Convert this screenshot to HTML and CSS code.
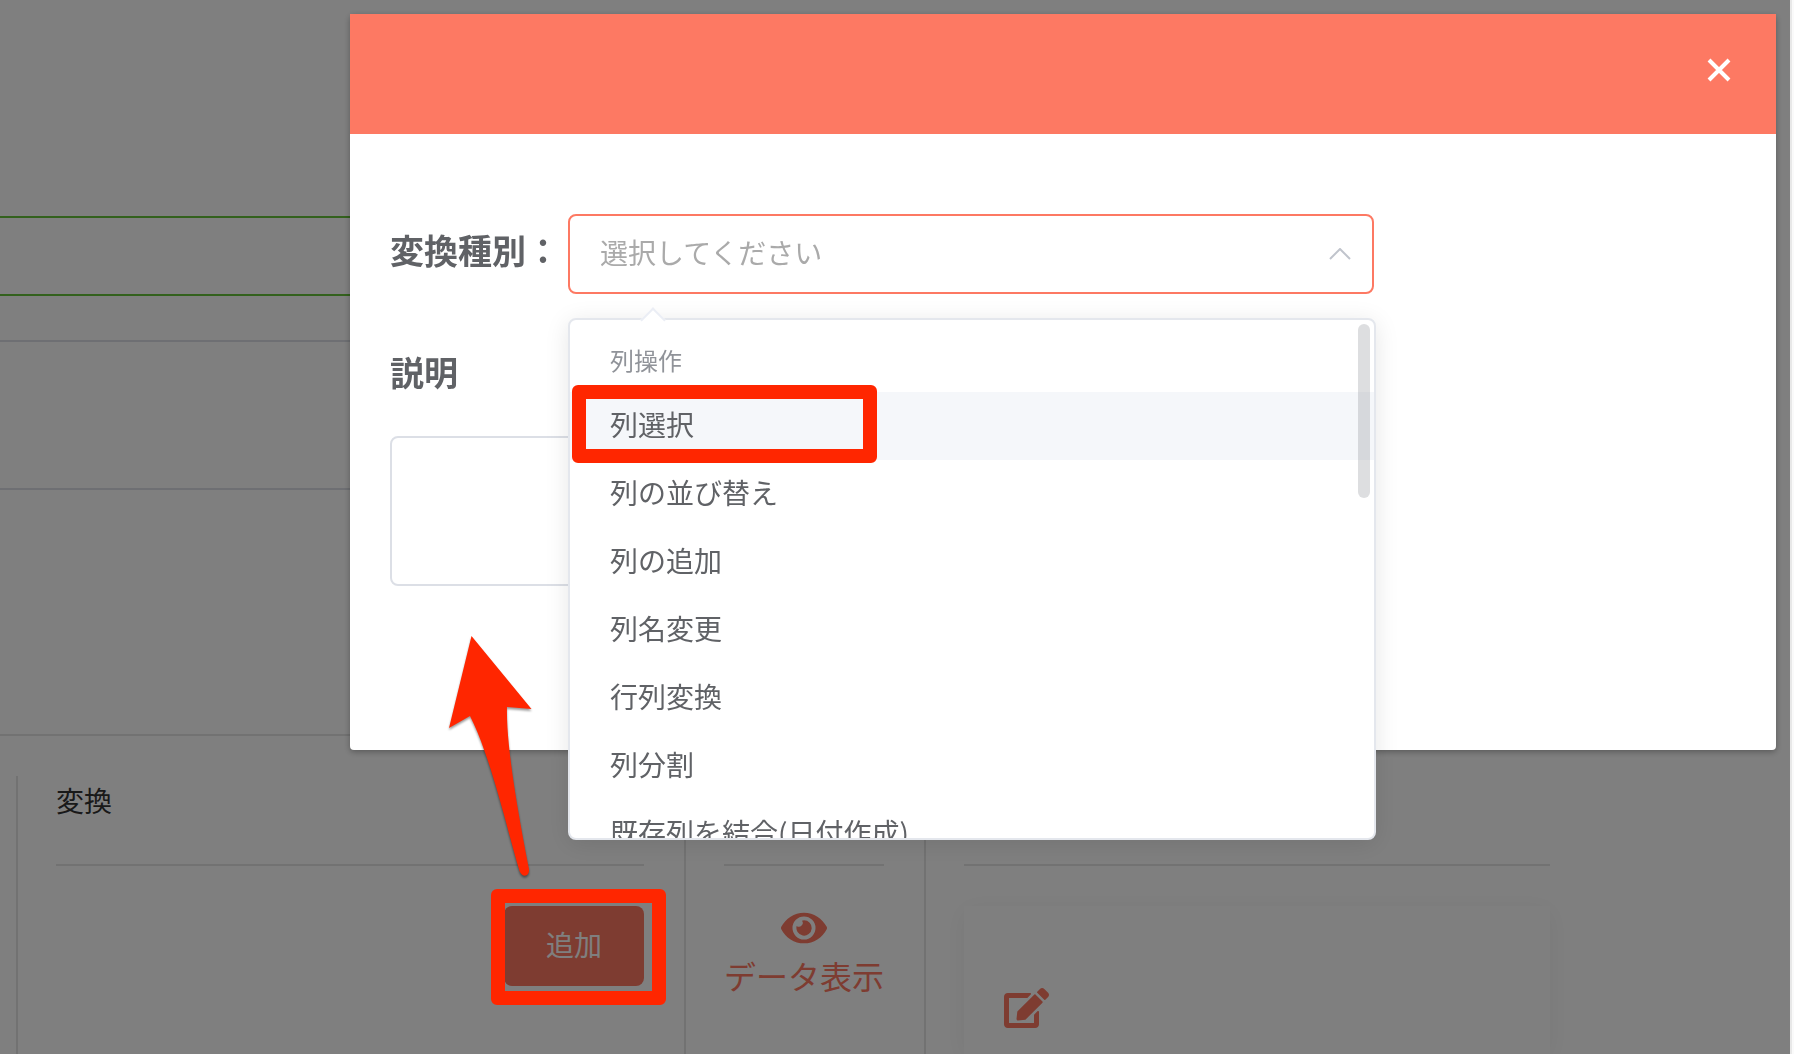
FILE: index.html
```html
<!DOCTYPE html>
<html lang="ja">
<head>
  <meta charset="UTF-8">
  <title>変換</title>
  <link rel="stylesheet" href="styles.css">
</head>
<body>
  <div class="page">
    <main class="main">
      <div class="toolbar"></div>
      <div class="notice"></div>
      <div class="panel"></div>
      <div class="spacer"></div>
      <div class="columns">
        <section class="column">
          <div class="column-head">変換</div>
          <div class="column-body align-right">
            <button type="button" class="add-btn">追加</button>
          </div>
        </section>
        <section class="column">
          <div class="column-head"></div>
          <div class="column-body">
            <a href="#" class="data-link">
              <svg class="eye-icon" viewBox="0 0 576 512" fill="currentColor">
                <path d="M572.52 241.4C518.29 135.59 410.93 64 288 64S57.68 135.64 3.48 241.41a32.35 32.35 0 0 0 0 29.19C57.71 376.41 165.07 448 288 448s230.32-71.64 284.52-177.41a32.35 32.35 0 0 0 0-29.19zM288 400a144 144 0 1 1 144-144 143.93 143.93 0 0 1-144 144zm0-240a95.31 95.31 0 0 0-25.18 3.79 47.85 47.85 0 0 1-66.9 66.9A95.78 95.78 0 1 0 288 160z"/>
              </svg>
              データ表示
            </a>
          </div>
        </section>
        <section class="column">
          <div class="column-head"></div>
          <div class="column-body">
            <div class="card">
              <button type="button" class="edit-btn" aria-label="編集">
                <svg class="edit-icon" viewBox="0 0 576 512" fill="currentColor">
                  <path d="M402.6 83.2l90.2 90.2c3.8 3.8 3.8 10 0 13.8L274.4 405.6l-92.8 10.3c-12.4 1.4-22.9-9.1-21.5-21.5l10.3-92.8L388.8 83.2c3.8-3.8 10-3.8 13.8 0zm162-22.9l-48.8-48.8c-15.2-15.2-39.9-15.2-55.2 0l-35.4 35.4c-3.8 3.8-3.8 10 0 13.8l90.2 90.2c3.8 3.8 10 3.8 13.8 0l35.4-35.4c15.2-15.3 15.2-40 0-55.2zM384 346.2V448H64V128h229.8c3.2 0 6.2-1.3 8.5-3.5l40-40c7.6-7.6 2.2-20.5-8.5-20.5H48C21.5 64 0 85.5 0 112v352c0 26.5 21.5 48 48 48h352c26.5 0 48-21.5 48-48V306.2c0-10.7-12.9-16-20.5-8.5l-40 40c-2.2 2.3-3.5 5.3-3.5 8.5z"/>
                </svg>
              </button>
            </div>
          </div>
        </section>
      </div>
    </main>
    <div class="page-edge"></div>
  </div>

  <div class="overlay">
    <div class="dialog" role="dialog">
      <div class="dialog-header">
        <button type="button" class="close-btn" aria-label="閉じる">
          <svg class="close-icon" viewBox="0 0 24 24" fill="none" stroke="currentColor" stroke-width="4">
            <path d="M2 2L22 22M22 2L2 22"/>
          </svg>
        </button>
      </div>
      <div class="dialog-body">
        <div class="form-row">
          <label class="form-label" for="convertType">変換種別：</label>
          <div class="select-wrapper">
            <select id="convertType" class="select-input">
              <option value="">選択してください</option>
            </select>
            <svg class="select-arrow" viewBox="0 0 22 12" fill="none" stroke="currentColor" stroke-width="2">
              <path d="M1 11L11 1L21 11"/>
            </svg>
            <div class="dropdown">
              <div class="dropdown-scroll">
                <div class="group-title">列操作</div>
                <ul class="options">
                  <li class="option hover">列選択</li>
                  <li class="option">列の並び替え</li>
                  <li class="option">列の追加</li>
                  <li class="option">列名変更</li>
                  <li class="option">行列変換</li>
                  <li class="option">列分割</li>
                  <li class="option">既存列を結合(日付作成)</li>
                </ul>
              </div>
              <div class="scroll-thumb"></div>
            </div>
          </div>
        </div>
        <label class="form-label desc-label" for="description">説明</label>
        <textarea id="description" class="desc-input"></textarea>
      </div>
    </div>
  </div>

  <!-- 操作手順の目印 -->
  <div class="mark mark-option"></div>
  <div class="mark mark-add"></div>
  <svg class="mark-arrow" viewBox="0 0 90 246">
    <path fill="#ff2600" d="M25.5 3L85.5 76L61 74C60 112 72 180 83 236C84 244 76 245 73.500 238C61 195 44 122 24 83L3 95Z"/>
  </svg>
</body>
</html>
```

FILE: styles.css
```css
* {
  box-sizing: border-box;
}
body {
  margin: 0;
  background: #fff;
  color: #333;
  font-family: "Noto Sans CJK JP", sans-serif;
  font-size: 28px;
  overflow: hidden;
}
button,
select,
textarea {
  font-family: inherit;
  font-size: inherit;
}
.page {
  display: flex;
  height: 100vh;
}
.main {
  flex: 1;
  display: flex;
  flex-direction: column;
}
.page-edge {
  width: 4px;
  border-left: 2px solid #e8e8e8;
  background: #fafafa;
}
.toolbar {
  height: 216px;
}
.notice,
.panel,
.spacer {
  margin-right: 40px;
}
.notice {
  height: 80px;
  margin-bottom: 44px;
  border-top: 2px solid #67c23a;
  border-bottom: 2px solid #67c23a;
}
.panel {
  height: 150px;
  border-top: 2px solid #dcdfe6;
  border-bottom: 2px solid #dcdfe6;
}
.spacer {
  height: 246px;
  margin-bottom: 40px;
  border-bottom: 2px solid #e4e4e4;
}
.columns {
  flex: 1;
  display: grid;
  grid-template-columns: 668px 240px 1fr;
  padding: 0 200px 0 16px;
}
.column {
  display: flex;
  flex-direction: column;
  padding: 0 40px 0 38px;
  border-left: 2px solid #e4e4e4;
}
.column-head {
  height: 90px;
  line-height: 48px;
  border-bottom: 2px solid #e4e4e4;
}
.column-body {
  flex: 1;
  padding-top: 40px;
}
.align-right {
  text-align: right;
}
.add-btn {
  width: 140px;
  height: 80px;
  padding: 0 0 4px;
  border: none;
  border-radius: 8px;
  background: #fd7963;
  color: #fff;
  cursor: pointer;
}
.data-link {
  display: flex;
  flex-direction: column;
  align-items: center;
  color: #fd7963;
  font-size: 32px;
  line-height: 50px;
  text-decoration: none;
  white-space: nowrap;
}
.eye-icon {
  width: 46px;
  height: 44px;
}
.card {
  height: 100%;
  padding: 82px 40px 0;
  background: #fff;
  box-shadow: 0 4px 24px rgba(0, 0, 0, 0.06);
}
.edit-btn {
  display: flex;
  padding: 0;
  border: none;
  background: none;
  color: #fd7963;
  cursor: pointer;
}
.edit-icon {
  width: 45px;
  height: 40px;
}

/* ダイアログ */
.overlay {
  position: fixed;
  top: 0;
  right: 4px;
  bottom: 0;
  left: 0;
  padding: 14px 14px 0 350px;
  background: rgba(0, 0, 0, 0.5);
}
.dialog {
  border-radius: 4px;
  background: #fff;
  box-shadow: 0 2px 6px rgba(0, 0, 0, 0.3);
}
.dialog-header {
  display: flex;
  align-items: center;
  justify-content: flex-end;
  height: 120px;
  padding: 0 45px;
  background: #fd7963;
}
.close-btn {
  display: flex;
  padding: 0;
  border: none;
  background: none;
  color: #fff;
  cursor: pointer;
}
.close-icon {
  width: 24px;
  height: 24px;
  margin-bottom: 8px;
}
.dialog-body {
  padding: 80px 40px 164px;
}
.form-row {
  display: flex;
  gap: 8px;
}
.form-label {
  padding-top: 12px;
  color: #606266;
  font-size: 34px;
  font-weight: bold;
  line-height: 48px;
  white-space: nowrap;
}
.desc-label {
  display: block;
  margin: 42px 0 40px;
}
.select-wrapper {
  position: relative;
  flex: 0 1 806px;
}
.select-input {
  display: block;
  width: 100%;
  height: 80px;
  padding: 0 60px 4px 30px;
  border: 2px solid #fd7963;
  border-radius: 8px;
  background: #fff;
  color: #aaa;
  appearance: none;
  outline: none;
}
.select-arrow {
  position: absolute;
  top: 34px;
  right: 23px;
  width: 22px;
  height: 12px;
  color: #c0c4cc;
}
.desc-input {
  display: block;
  width: 60%;
  height: 150px;
  padding: 10px 30px;
  border: 2px solid #dcdfe6;
  border-radius: 8px;
  resize: none;
}
.dropdown {
  position: absolute;
  top: 104px;
  left: 0;
  width: 808px;
  border: 2px solid #e4e7ed;
  border-radius: 8px;
  background: #fff;
  box-shadow: 0 4px 24px rgba(0, 0, 0, 0.1);
}
.dropdown::before {
  content: "";
  position: absolute;
  top: -9px;
  left: 74px;
  width: 16px;
  height: 16px;
  border-top: 2px solid #ebeef5;
  border-left: 2px solid #ebeef5;
  background: #fff;
  transform: rotate(45deg);
}
.dropdown-scroll {
  position: relative;
  height: 518px;
  padding-top: 12px;
  border-radius: 6px;
  overflow-x: hidden;
  overflow-y: auto;
  scrollbar-width: none;
}
.group-title {
  padding: 0 40px 4px;
  color: #909399;
  font-size: 24px;
  line-height: 56px;
}
.options {
  margin: 0;
  padding: 0;
  list-style: none;
}
.option {
  padding: 0 40px 4px;
  color: #606266;
  line-height: 64px;
  cursor: pointer;
}
.option.hover {
  background: #f5f7fa;
}
.scroll-thumb {
  position: absolute;
  top: 4px;
  right: 4px;
  width: 12px;
  height: 174px;
  border-radius: 6px;
  background: rgba(144, 147, 153, 0.3);
}

/* 赤枠と矢印 */
.mark {
  position: absolute;
  border: 14px solid #ff2600;
  border-radius: 6px;
  pointer-events: none;
}
.mark-option {
  top: 385px;
  left: 572px;
  width: 305px;
  height: 78px;
}
.mark-add {
  top: 889px;
  left: 491px;
  width: 175px;
  height: 116px;
}
.mark-arrow {
  position: absolute;
  top: 633px;
  left: 446px;
  width: 90px;
  height: 246px;
  overflow: visible;
  filter: drop-shadow(0 2px 1px rgba(0, 0, 0, 0.4));
  pointer-events: none;
}
```
